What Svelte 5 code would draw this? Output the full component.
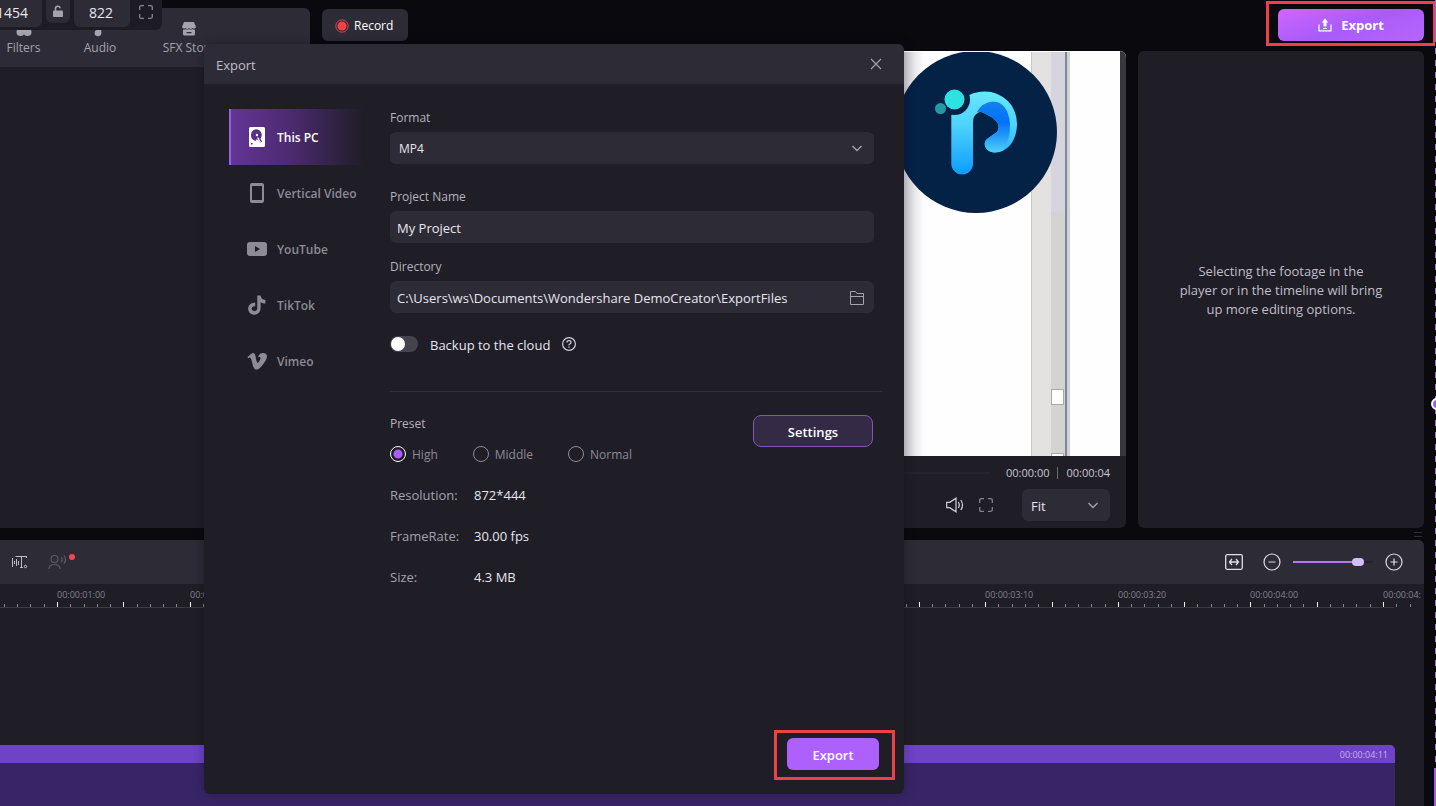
<!--
  App.svelte
  Video editor workspace with the export dialog open above it.
-->
<script lang="ts">
  type IconName = 'disk' | 'phone' | 'youtube' | 'tiktok' | 'vimeo';

  interface Target {
    label: string;
    icon: IconName;
  }

  const targets: Target[] = [
    { label: 'This PC', icon: 'disk' },
    { label: 'Vertical Video', icon: 'phone' },
    { label: 'YouTube', icon: 'youtube' },
    { label: 'TikTok', icon: 'tiktok' },
    { label: 'Vimeo', icon: 'vimeo' },
  ];

  const presets = ['High', 'Middle', 'Normal'];

  const details = [
    { label: 'Resolution:', value: '872*444' },
    { label: 'FrameRate:', value: '30.00 fps' },
    { label: 'Size:', value: '4.3 MB' },
  ];

  let active = $state('This PC');
  let preset = $state('High');
  let projectName = $state('My Project');
  let directory = $state('C:\\Users\\ws\\Documents\\Wondershare DemoCreator\\ExportFiles');
  let backup = $state(false);
  let zoom = $state(87);
  let canvasWidth = $state('1454');
  let canvasHeight = $state('822');

  /* ruler: one tick per frame, a long one every 5, a label every 10 */
  const FIRST = 57;
  const STEP = 13.26;
  const LAST = 104;
  const ticks = Array.from({ length: LAST + 3 }, (_, i) => {
    const n = i - 4;
    const frame = 30 + n;
    const seconds = String(Math.floor(frame / 30)).padStart(2, '0');
    const rest = n < 100 ? String(frame % 30).padStart(2, '0') : '';
    return {
      x: Math.round(FIRST + n * STEP),
      long: n % 5 === 0,
      label: n % 10 === 0 ? `00:00:${seconds}:${rest}` : '',
    };
  });
</script>

{#snippet chevron()}
  <svg class="chevron" width="12" height="12" viewBox="0 0 12 12" aria-hidden="true">
    <path d="M1.5 4 6 8.5 10.5 4" fill="none" stroke="#a5a3ad" stroke-width="1.4" />
  </svg>
{/snippet}

{#snippet corners()}
  <svg width="14" height="14" viewBox="0 0 14 14" aria-hidden="true">
    <path
      d="M.7 5V2.2Q.7.7 2.2.7H5M9 .7h2.8q1.5 0 1.5 1.5V5M13.3 9v2.8q0 1.5-1.5 1.5H9M5 13.3H2.2Q.7 13.3.7 11.8V9"
      fill="none" stroke="#85838e" stroke-width="1.3"
    />
  </svg>
{/snippet}

{#snippet targetIcon(name: IconName)}
  <svg width="20" height="20" viewBox="0 0 20 20" fill="currentColor" aria-hidden="true">
    {#if name === 'disk'}
      <path fill-rule="evenodd" d="M3.5 0h13A1.5 1.5 0 0 1 18 1.5v17a1.5 1.5 0 0 1-1.5 1.5h-13A1.5 1.5 0 0 1 2 18.5v-17A1.5 1.5 0 0 1 3.5 0ZM10 2.2a6 6 0 0 0-1.500 11.800l1-1.800 2 1 1.500 2.500 2.200-1.300-1.800-2.600A6 6 0 0 0 10 2.200ZM4 16v1.600h1.600V16Z" />
      <circle cx="10" cy="8" r="1.2" />
      <path d="m10.600 10.500 3 5" stroke="currentColor" stroke-width="1.200" />
    {:else if name === 'phone'}
      <path fill-rule="evenodd" d="M5 0h10a2 2 0 0 1 2 2v16a2 2 0 0 1-2 2H5a2 2 0 0 1-2-2V2a2 2 0 0 1 2-2Zm0 3v14h10V3Z" />
    {:else if name === 'youtube'}
      <path fill-rule="evenodd" d="M3 3h14q3 0 3 3v8q0 3-3 3H3q-3 0-3-3V6q0-3 3-3Zm5 4v6l5-3Z" />
    {:else if name === 'tiktok'}
      <path d="M10.300.4h3.300c.3 2.600 2 4.300 4.800 4.500v3.500c-1.800 0-3.400-.5-4.800-1.500v6.200c0 4.200-2.900 6.600-6.200 6.600-3.500 0-6.200-2.600-6.200-6 0-3.800 3.200-6.400 7-5.900v3.600c-2-.5-3.500.6-3.500 2.200 0 1.500 1.200 2.500 2.600 2.500 1.800 0 3-1.200 3-3.200Z" />
    {:else}
      <path d="M20 5.600c-.1 1.900-1.400 4.500-4 7.800-2.700 3.500-5 5.200-6.900 5.200-1.200 0-2.100-1.100-2.900-3.200L4.600 9.600C4 7.500 3.400 6.400 2.700 6.400c-.1 0-.6.300-1.400.9L.4 6.100c.9-.8 1.800-1.600 2.700-2.400C4.300 2.700 5.200 2.100 5.800 2c1.400-.1 2.300.9 2.700 2.900.4 2.300.7 3.700.8 4.200.4 1.900.9 2.800 1.300 2.800.4 0 .9-.6 1.700-1.700.7-1.200 1.100-2 1.200-2.600.1-1-.3-1.500-1.200-1.500-.4 0-.8.100-1.300.3C11.900 3.500 13.500 2 15.900 2c2.800 0 4.200 1.200 4.100 3.600Z" />
    {/if}
  </svg>
{/snippet}

<div class="editor">
  <div class="workspace">
    <section class="media">
      <nav class="media-tabs">
        <a href="#filters">
          <svg width="16" height="16" viewBox="0 0 16 16" fill="currentColor" aria-hidden="true">
            <circle cx="8" cy="5" r="4" /><circle cx="4.5" cy="11" r="4" /><circle cx="11.5" cy="11" r="4" />
          </svg>
          <span>Filters</span>
        </a>
        <a href="#audio">
          <svg width="16" height="16" viewBox="0 0 16 16" fill="currentColor" aria-hidden="true">
            <circle cx="6" cy="12" r="3.3" /><path d="M7.700 1H9l4 2v3L9.300 4.500V12H7.700Z" />
          </svg>
          <span>Audio</span>
        </a>
        <a href="#sfx">
          <svg width="16" height="16" viewBox="0 0 16 16" fill="currentColor" aria-hidden="true">
            <path d="M3 1h10l2 5a2.200 2.200 0 0 1-3.600 1A2.300 2.300 0 0 1 8 7a2.300 2.300 0 0 1-3.400 0A2.200 2.200 0 0 1 1 6Z" />
            <path fill-rule="evenodd" d="M2 8.500q1.500.5 2.600-.4 1.600 1 3.400 0 1.700 1 3.400 0 1.200.9 2.600.4V13q0 1.500-1.500 1.500h-9Q2 14.500 2 13ZM5.500 11v1.300h5V11Z" />
          </svg>
          <span>SFX Store</span>
        </a>
      </nav>
    </section>

    <div class="stage-column">
      <button class="record" type="button">
        <svg width="14" height="14" viewBox="0 0 12 12" aria-hidden="true">
          <circle cx="6" cy="6" r="5.3" fill="none" stroke="#e5484d" stroke-width=".8" />
          <circle cx="6" cy="6" r="3.9" fill="#ee4448" />
        </svg>
        Record
      </button>

      <section class="player">
        <div class="video">
          <svg width="224" height="404" viewBox="0 0 224 404" aria-label="Video preview" role="img">
            <defs>
              <linearGradient id="stem" x1="0" y1="0" x2="0" y2="1">
                <stop offset="0" stop-color="#66e8fb" />
                <stop offset=".4" stop-color="#4fd3fa" />
                <stop offset="1" stop-color="#0b9dff" />
              </linearGradient>
              <linearGradient id="bowl" x1="0" y1="0" x2="0" y2="1">
                <stop offset="0" stop-color="#1583ec" />
                <stop offset=".4" stop-color="#0070fb" />
                <stop offset=".65" stop-color="#1f96fa" />
                <stop offset="1" stop-color="#4dd2f8" />
              </linearGradient>
              <linearGradient id="edge" x1="0" y1="0" x2="1" y2="0">
                <stop offset="0" stop-color="#cdcdd2" />
                <stop offset="1" stop-color="#fff" />
              </linearGradient>
            </defs>
            <rect width="224" height="404" fill="#fefefe" />
            <rect x="8" width="20" height="404" fill="url(#edge)" />
            <rect x="135" width="34" height="404" fill="#e3e2e0" />
            <rect x="135" width="1" height="404" fill="#c9c8c8" />
            <rect x="155" y="160" width="14" height="244" fill="#d3d3d3" />
            <rect x="155" width="14" height="160" fill="#d6d5dd" />
            <rect x="169" width="2" height="404" fill="#7f8896" />
            <rect x="171" width="3" height="404" fill="#d0d2d6" />
            <rect x="155.5" y="337.5" width="12" height="15" fill="#fff" stroke="#a9a9a9" />
            <rect x="155.5" y="401.5" width="12" height="6" fill="#fff" stroke="#a9a9a9" />
            <circle cx="80" cy="80" r="81" fill="#042146" />
            <path
              d="M55.3 63V111.500a10.800 10.800 0 0 0 21.700 0V70Q77 64 81 61.500 84 59 88 61L97 66 101.500 70.500Q104 76 101 80L91 87Q88.700 88.500 88.700 91.500C88.700 96 92 100.500 99 100.500 112 100.500 121 88 121 71.500A32 32 0 0 0 89 39.500Q80 39.500 73 43Z"
              fill="url(#stem)"
            />
            <path
              d="M81 60Q86 50.500 97 49.500 112 50 114 72 114.500 88 107 98.500 103 100.500 99 100.500C92 100.500 88.700 96 88.700 91.500Q88.700 88.500 91 87L101 80Q104 76 101.500 70.500L97 66 88 61Q84 59 81 60Z"
              fill="url(#bowl)"
            />
            <circle cx="58.5" cy="47.5" r="15.5" fill="#042146" />
            <circle cx="58.5" cy="47.5" r="10" fill="#2de2e0" />
            <circle cx="44.5" cy="56.5" r="5.5" fill="#249aa5" />
          </svg>
        </div>
        <div class="player-time">
          <div class="seek"></div>
          <span>00:00:00</span>
          <i></i>
          <span>00:00:04</span>
        </div>
        <div class="player-tools">
          <button type="button" class="plain" aria-label="Volume">
            <svg width="18" height="16" viewBox="0 0 18 16" fill="none" stroke="#d2d0da" stroke-width="1.2" aria-hidden="true">
              <path d="M.7 5.300h3L10 1.200v13.600l-6.300-4.100h-3ZM12.300 5q2 3 0 6M14.800 3q3.400 5 0 10" />
            </svg>
          </button>
          <button type="button" class="plain" aria-label="Full screen">{@render corners()}</button>
          <div class="select fit">
            <select aria-label="Player zoom"><option>Fit</option></select>
            {@render chevron()}
          </div>
        </div>
      </section>
    </div>

    <div class="side-column">
      <div class="callout">
        <button class="export-top" type="button">
          <svg width="14" height="14" viewBox="0 0 14 14" aria-hidden="true">
            <path d="M1 6.500v6.300h12V6.500" fill="none" stroke="#fff" stroke-width="1.2" />
            <path d="M7 .5 10.300 4.500H8.500V8.500h-3V4.500H3.700ZM5 10h4v1H5Z" fill="#fff" />
          </svg>
          Export
        </button>
      </div>
      <section class="properties">
        <p>Selecting the footage in the<br />player or in the timeline will bring<br />up more editing options.</p>
      </section>
    </div>
  </div>

  <div class="gap"><i></i></div>

  <section class="timeline">
    <header class="timeline-bar">
      <button type="button" class="plain" aria-label="Speech to text">
        <svg width="16" height="14" viewBox="0 0 16 14" fill="none" stroke="#bebcc6" aria-hidden="true">
          <path d="M.5 3v9M2.500 6v3M4.500 4v7M3.500 1.500h11M14.500 1v2M9.500 2v11M8 12.500h3" /><path d="M6.500 6v4" /><circle cx="13.5" cy="11.5" r="1.2" />
        </svg>
      </button>
      <button type="button" class="plain" aria-label="Text to speech">
        <svg width="28" height="18" viewBox="0 0 28 18" fill="none" stroke="#5c5a65" stroke-width="1.2" aria-hidden="true">
          <circle cx="6.5" cy="6" r="3.5" /><path d="M1 16q0-4.500 5.500-4.500T12 16M13.500 4q1.500 2.500 0 5M16 2.500q3 4 0 8" /><circle cx="24" cy="4" r="3" fill="#ec4b50" stroke="none" />
        </svg>
      </button>
      <div class="zoom">
        <button type="button" class="plain" aria-label="Fit timeline">
          <svg width="18" height="16" viewBox="0 0 18 16" fill="none" stroke="#e0deea" stroke-width="1.3" aria-hidden="true">
            <rect x=".7" y=".7" width="16.6" height="14.6" rx="1.5" /><path d="M7 5 4.500 8 7 11M11 5l2.500 3-2.500 3M5 8h8" />
          </svg>
        </button>
        <button type="button" class="plain" aria-label="Zoom out">
          <svg width="18" height="18" viewBox="0 0 18 18" fill="none" stroke="#e0deea" stroke-width="1.2" aria-hidden="true">
            <circle cx="9" cy="9" r="8" /><path d="M5.500 9h7" />
          </svg>
        </button>
        <input type="range" aria-label="Timeline zoom" min="0" max="100" bind:value={zoom} style="--fill: {zoom}%" />
        <button type="button" class="plain" aria-label="Zoom in">
          <svg width="18" height="18" viewBox="0 0 18 18" fill="none" stroke="#e0deea" stroke-width="1.2" aria-hidden="true">
            <circle cx="9" cy="9" r="8" /><path d="M5.500 9h7M9 5.500v7" />
          </svg>
        </button>
      </div>
    </header>
    <div class="ruler">
      <svg width="100%" height="24" aria-hidden="true">
        <path d="M0 23.500H1394" stroke="#3a3842" />
        {#each ticks as tick}
          <rect x={tick.x} y={tick.long ? 18 : 20} width="1" height={tick.long ? 5 : 3} fill={tick.long ? '#fff' : '#85838d'} />
          {#if tick.label}
            <text x={tick.x} y="14">{tick.label}</text>
          {/if}
        {/each}
      </svg>
    </div>
    <div class="clip">
      <div class="clip-head">00:00:04:11</div>
    </div>
  </section>

  <div class="canvas-size">
    <input class="chip wide" aria-label="Width" bind:value={canvasWidth} />
    <button type="button" class="chip lock" aria-label="Lock ratio">
      <svg width="12" height="13" viewBox="0 0 12 13" aria-hidden="true">
        <rect x="1" y="5.500" width="10" height="6.500" rx="1" fill="#a5a3ad" />
        <path d="M3.500 6V3.500q0-2.300 2.300-2.300T8 3.300" fill="none" stroke="#a5a3ad" stroke-width="1.6" />
      </svg>
    </button>
    <input class="chip" aria-label="Height" bind:value={canvasHeight} />
    <button type="button" class="plain" aria-label="Select full screen">{@render corners()}</button>
  </div>

  <div class="selection-edge"><i></i></div>

  <div class="dialog" role="dialog" aria-labelledby="dialog-title">
    <header class="dialog-head">
      <h1 id="dialog-title">Export</h1>
      <button type="button" class="plain" aria-label="Close">
        <svg width="12" height="12" viewBox="0 0 12 12" aria-hidden="true">
          <path d="m1 1 10 10M11 1 1 11" stroke="#a5a3ad" stroke-width="1.1" />
        </svg>
      </button>
    </header>

    <div class="dialog-body">
      <nav class="targets">
        {#each targets as target}
          <button type="button" class:active={active === target.label} onclick={() => (active = target.label)}>
            {@render targetIcon(target.icon)}
            <span>{target.label}</span>
          </button>
        {/each}
      </nav>

      <form class="form">
        <div class="field format">
          <label for="format">Format</label>
          <div class="select">
            <select id="format"><option>MP4</option></select>
            {@render chevron()}
          </div>
        </div>

        <div class="field">
          <label for="name">Project Name</label>
          <input id="name" class="text" type="text" bind:value={projectName} />
        </div>

        <div class="field">
          <label for="directory">Directory</label>
          <div class="with-button">
            <input id="directory" type="text" bind:value={directory} />
            <button type="button" class="plain" aria-label="Browse">
              <svg width="14" height="14" viewBox="0 0 14 14" fill="none" stroke="#a5a3ad" aria-hidden="true">
                <path d="M.5 13.500V.5h5l1.500 2h6.500v11ZM.5 5.500h13" />
              </svg>
            </button>
          </div>
        </div>

        <div class="backup">
          <input id="backup" type="checkbox" class="toggle" bind:checked={backup} />
          <label for="backup">Backup to the cloud</label>
          <button type="button" class="plain" aria-label="Help">
            <svg width="14" height="14" viewBox="0 0 14 14" fill="none" stroke="#d2d0da" aria-hidden="true">
              <circle cx="7" cy="7" r="6.4" stroke-width="1.2" /><path d="M5 5.500Q5 3.700 7 3.700t2 1.700Q9 6.500 7.800 7T7 8.500M7 9.500v1.300" stroke-width="1.2" />
            </svg>
          </button>
        </div>

        <hr />

        <div class="preset-row">
          <fieldset>
            <legend>Preset</legend>
            <div class="radios">
              {#each presets as name}
                <label><input type="radio" name="preset" value={name} bind:group={preset} /><span>{name}</span></label>
              {/each}
            </div>
          </fieldset>
          <button type="button" class="settings">Settings</button>
        </div>

        <dl>
          {#each details as row}
            <dt>{row.label}</dt>
            <dd>{row.value}</dd>
          {/each}
        </dl>
      </form>
    </div>

    <footer class="dialog-foot">
      <div class="callout">
        <button type="button" class="export-main">Export</button>
      </div>
    </footer>
  </div>
</div>

<style>
  :global(body) {
    background: #0a090e;
  }

  .editor,
  .editor * {
    box-sizing: border-box;
  }

  .editor {
    --panel: #1f1d26;
    --bar: #2d2b35;
    --text: #e8e6ee;
    --muted: #a5a3ad;
    position: relative;
    display: flex;
    flex-direction: column;
    min-height: 100vh;
    overflow: hidden;
    background: #0a090e;
    color: var(--text);
    font: 13px/20px "Open Sans", "Noto Sans", sans-serif;
  }

  button,
  input,
  select {
    margin: 0;
    border: 0;
    font: inherit;
    color: inherit;
    background: none;
  }

  svg {
    display: block;
    flex-shrink: 0;
  }

  .plain {
    padding: 0;
  }

  /* ── Upper panels ── */
  .workspace {
    display: grid;
    grid-template-columns: 310px 1fr 286px;
    gap: 12px;
    height: 528px;
    padding-right: 12px;
  }

  .media {
    margin-top: 8px;
    border-radius: 0 6px 0 0;
    overflow: hidden;
    background: var(--panel);
  }

  .media-tabs {
    display: grid;
    grid-template-columns: 47px 106px 72px;
    height: 59px;
    padding-top: 13px;
    background: var(--bar);
  }

  .media-tabs a {
    display: flex;
    flex-direction: column;
    align-items: center;
    gap: 1px;
    font-size: 12px;
    white-space: nowrap;
    color: var(--muted);
    text-decoration: none;
  }

  .stage-column,
  .side-column {
    display: flex;
    flex-direction: column;
    min-width: 0;
  }

  .record {
    display: flex;
    align-items: center;
    align-self: flex-start;
    gap: 5px;
    height: 32px;
    margin: 9px 0 10px;
    padding: 2px 15px 0 13px;
    border-radius: 6px;
    background: var(--bar);
    font-size: 12px;
    color: #fff;
  }

  .player {
    flex: 1;
    border-radius: 6px;
    overflow: hidden;
    background: var(--panel);
  }

  .video {
    display: flex;
    justify-content: flex-end;
    height: 405px;
    padding-top: 1px;
    border-right: 6px solid #38373e;
    background: #fefefe;
  }

  .player-time {
    display: flex;
    align-items: center;
    gap: 8px;
    height: 32px;
    padding: 1px 16px 0 0;
    font-size: 11px;
    color: #c9c7d1;
  }

  .seek {
    flex: 1;
    height: 2px;
    margin-right: 8px;
    background: #25232c;
  }

  .player-time i {
    width: 1px;
    height: 12px;
    background: #6b6975;
  }

  .player-tools {
    display: flex;
    align-items: center;
    justify-content: flex-end;
    gap: 15px;
    padding: 1px 16px 0 0;
  }

  .select {
    position: relative;
    display: flex;
    height: 32px;
    border-radius: 6px;
    background: var(--bar);
  }

  .select select {
    appearance: none;
    width: 100%;
    padding: 2px 28px 0 9px;
    font-size: 12px;
  }

  .select .chevron {
    position: absolute;
    top: 10px;
    right: 11px;
    pointer-events: none;
  }

  .fit {
    width: 88px;
    margin-left: 14px;
  }

  .select.fit select {
    font-size: 13px;
  }

  .callout {
    border: 3px solid #ee4145;
  }

  .side-column .callout {
    align-self: flex-end;
    height: 45px;
    margin: 1px -12px 5px 0;
    padding: 5px 9px 0;
  }

  .export-top {
    display: flex;
    align-items: center;
    justify-content: center;
    gap: 9px;
    width: 146px;
    height: 32px;
    border-radius: 6px;
    background: linear-gradient(160deg, #cf66fc, #a95bfb 50%, #b765fa);
    font-weight: 700;
    color: #fff;
  }

  .properties {
    display: flex;
    flex: 1;
    align-items: center;
    justify-content: center;
    padding-top: 2px;
    border-radius: 6px;
    background: var(--panel);
    line-height: 19px;
    text-align: center;
    color: #c0bec8;
  }

  .properties p {
    margin: 0;
  }

  .gap {
    display: flex;
    justify-content: flex-end;
    height: 12px;
    padding: 4px 14px;
  }

  .gap i {
    width: 8px;
    height: 5px;
    border: solid #2d2b35;
    border-width: 1px 0;
  }

  /* ── Timeline ── */
  .timeline {
    flex: 1;
    display: flex;
    flex-direction: column;
    margin-right: 12px;
    border-radius: 0 6px 0 0;
    overflow: hidden;
    background: var(--panel);
  }

  .timeline-bar {
    display: flex;
    align-items: center;
    gap: 20px;
    height: 44px;
    padding: 0 21px 0 12px;
    background: var(--bar);
  }

  .zoom {
    display: flex;
    align-items: center;
    gap: 12px;
    margin-left: auto;
  }

  .zoom button:first-child {
    margin-right: 8px;
  }

  input[type='range'] {
    appearance: none;
    width: 80px;
    height: 10px;
    background: linear-gradient(90deg, #b676ee var(--fill), #24222b var(--fill)) center / 100% 2px no-repeat;
  }

  input[type='range']::-webkit-slider-thumb {
    appearance: none;
    width: 12px;
    height: 8px;
    border-radius: 4px;
    background: #d0bff5;
  }

  .ruler {
    height: 24px;
    overflow: hidden;
  }

  .ruler text {
    font: 9px "Open Sans", "Noto Sans", sans-serif;
    fill: #85838d;
  }

  .clip {
    flex: 1;
    min-height: 61px;
    margin: 137px 29px 0 0;
    border-radius: 0 5px 0 0;
    overflow: hidden;
    background: #382567;
  }

  .clip-head {
    height: 18px;
    padding-right: 7px;
    background: #6e43c6;
    font-size: 9px;
    line-height: 19px;
    text-align: right;
    color: #c7b2f0;
  }

  /* ── Floating canvas size bar ── */
  .canvas-size {
    position: absolute;
    top: 0;
    left: 0;
    display: flex;
    gap: 4px;
    height: 30px;
    padding-right: 9px;
    border-radius: 0 0 6px 0;
    background: #1d1b24;
  }

  .chip {
    width: 56px;
    height: 27px;
    padding: 0 2px 3px 0;
    border-radius: 0 0 6px 6px;
    background: var(--bar);
    font-size: 14px;
    text-align: center;
  }

  .chip.wide {
    width: 58px;
    margin-left: -16px;
  }

  .chip.lock {
    display: grid;
    place-items: center;
    width: 24px;
    height: 23px;
    padding: 0;
  }

  .canvas-size .plain {
    height: 23px;
    margin-left: 5px;
  }

  /* ── Recording area edge along the window side ── */
  .selection-edge {
    position: absolute;
    top: 0;
    right: 0;
    bottom: 0;
    width: 1px;
    background: repeating-linear-gradient(#9d6fd0 0 6px, #0a090e 6px 12px);
  }

  .selection-edge::before,
  .selection-edge::after {
    content: '';
    position: absolute;
    right: 0;
    width: 2px;
    background: #a55bf8;
  }

  .selection-edge::before {
    top: 0;
    width: 1px;
    height: 42px;
  }

  .selection-edge::after {
    bottom: 0;
    height: 38px;
  }

  .selection-edge i {
    position: absolute;
    top: 50%;
    right: -7px;
    width: 12px;
    height: 12px;
    margin-top: -5px;
    border: 2px solid #fff;
    border-radius: 50%;
    background: #a55bf8;
  }

  /* ── Export dialog ── */
  .dialog {
    position: absolute;
    top: 44px;
    left: 204px;
    display: flex;
    flex-direction: column;
    width: 700px;
    min-height: 750px;
    border-radius: 6px;
    overflow: hidden;
    background: var(--panel);
    box-shadow: 0 0 12px rgba(10, 8, 20, 0.3);
  }

  .dialog-head {
    display: flex;
    align-items: center;
    justify-content: space-between;
    height: 40px;
    padding: 0 22px 0 12px;
    background: var(--bar);
  }

  h1 {
    margin: 0;
    padding-top: 2px;
    font-size: 13px;
    font-weight: 400;
    color: #c0bec8;
  }

  .dialog-body {
    display: flex;
    flex: 1;
    gap: 25px;
    padding: 25px 22px 0 25px;
  }

  .targets {
    display: flex;
    flex-direction: column;
    width: 136px;
  }

  .targets button {
    display: flex;
    align-items: center;
    gap: 10px;
    height: 56px;
    padding: 0 0 0 16px;
    border-left: 2px solid transparent;
    font-size: 12px;
    font-weight: 600;
    white-space: nowrap;
    color: #8d8b96;
  }

  .targets span,
  .radios span,
  .backup label {
    padding-top: 2px;
  }

  .targets .active {
    border-color: #9a5fe0;
    background: linear-gradient(90deg, #623595, #4c2a70 45%, #1f1d26);
    color: #fff;
  }

  .form {
    flex: 1;
  }

  .field,
  .preset-row {
    display: flex;
    flex-direction: column;
    gap: 5px;
    margin: 0 8px 15px 0;
  }

  .field.format {
    margin-bottom: 24px;
  }

  .field label,
  legend {
    padding: 0;
    font-size: 12px;
    line-height: 18px;
    color: #b5b3bd;
  }

  .text,
  .with-button {
    height: 32px;
    padding: 2px 7px 0;
    border-radius: 6px;
    background: var(--bar);
  }

  .with-button {
    display: flex;
    align-items: center;
    padding-right: 10px;
  }

  .with-button input {
    flex: 1;
    padding: 0;
  }

  .backup {
    display: flex;
    align-items: center;
    gap: 12px;
    height: 20px;
    margin-top: 21px;
  }

  .toggle {
    appearance: none;
    width: 28px;
    height: 16px;
    padding: 1px;
    border-radius: 8px;
    background: #45434d;
  }

  .toggle::before {
    content: '';
    display: block;
    width: 14px;
    height: 14px;
    border-radius: 50%;
    background: #fff;
  }

  .toggle:checked {
    padding-left: 13px;
    background: #a55bf8;
  }

  hr {
    height: 1px;
    margin: 37px 0 23px;
    border: 0;
    background: #33313b;
  }

  .preset-row {
    flex-direction: row;
    align-items: flex-start;
    justify-content: space-between;
    margin: 0 9px 21px 0;
  }

  fieldset {
    min-width: 0;
    margin: 0;
    padding: 0;
    border: 0;
  }

  .radios {
    display: flex;
    gap: 35px;
    height: 20px;
    margin-top: 11px;
  }

  .radios label {
    display: flex;
    align-items: center;
    gap: 6px;
    font-size: 12px;
    color: #8d8b96;
  }

  input[type='radio'] {
    appearance: none;
    width: 16px;
    height: 16px;
    border: 1px solid #8d8b96;
    border-radius: 50%;
  }

  input[type='radio']:checked {
    border-color: #fff;
    background: radial-gradient(circle, #a95cfb 4px, transparent 5px);
  }

  .settings {
    width: 120px;
    height: 32px;
    padding: 2px 0 0;
    border: 1px solid #8355b4;
    border-radius: 8px;
    background: #352a45;
    font-weight: 600;
    color: #fff;
  }

  dl {
    display: grid;
    grid-template-columns: 84px 1fr;
    row-gap: 21px;
    margin: 0;
  }

  dt {
    color: var(--muted);
  }

  dd {
    margin: 0;
  }

  .dialog-foot {
    display: flex;
    justify-content: flex-end;
    padding: 0 9px 14px;
  }

  .dialog-foot .callout {
    padding: 5px 13px 7px 10px;
  }

  .export-main {
    display: block;
    width: 92px;
    height: 32px;
    padding: 2px 0 0;
    border-radius: 6px;
    background: #ae60fd;
    font-weight: 600;
    color: #fff;
  }
</style>
